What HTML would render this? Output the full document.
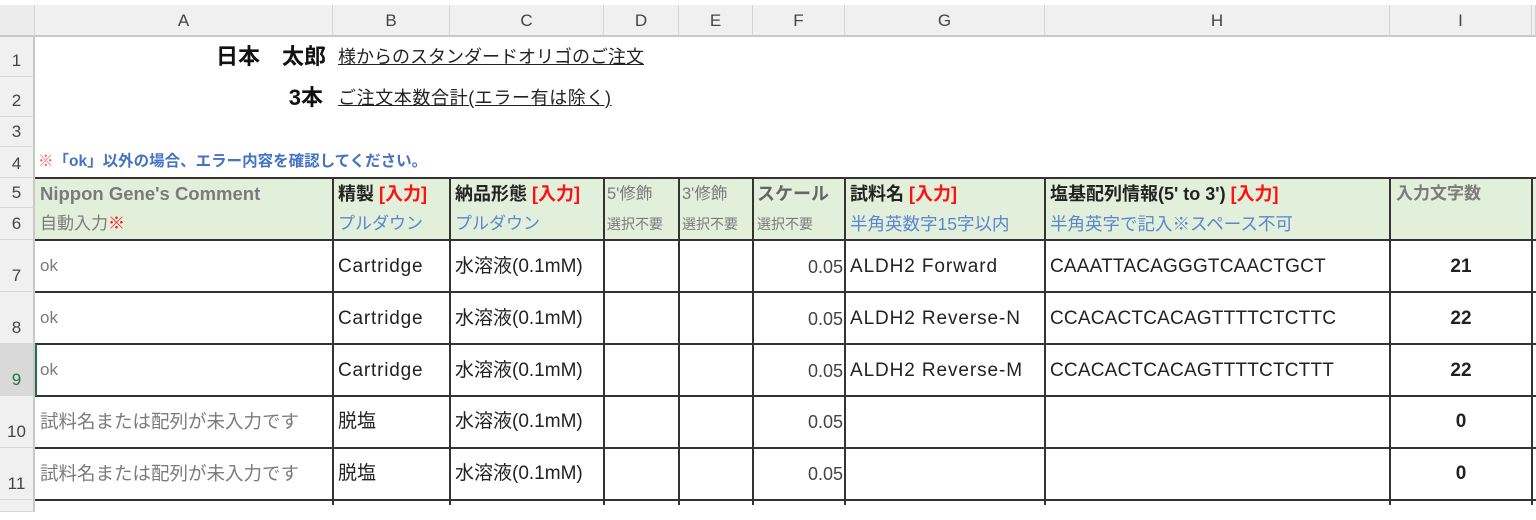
<!DOCTYPE html>
<html><head><meta charset="utf-8"><style>
*{margin:0;padding:0;box-sizing:border-box}
body{width:1536px;height:512px;background:#fff;position:relative;overflow:hidden;font-family:"Liberation Sans","Noto Sans CJK JP",sans-serif;color:#222}
.a{position:absolute;white-space:nowrap}
.ch{position:absolute;top:5px;height:32px;line-height:32px;text-align:center;font-size:17px;color:#444;background:#f0f0f0;border-right:1px solid #d4d4d4;border-bottom:2px solid #c8c8c8}
.rh{position:absolute;left:0;width:35px;background:#f0f0f0;border-bottom:1px solid #d8d8d8;border-right:2px solid #c8c8c8;font-size:17px;color:#444;text-align:center}
.vl{position:absolute;width:2px;background:#333}
.hl{position:absolute;height:2px;background:#333;left:35px;width:1501px}
.t{position:absolute;white-space:nowrap;font-size:18px;line-height:24px;height:24px;color:#222}
.t span{line-height:24px}
.d{font-size:19px}
.g{color:#7b7b7b}.b{color:#5b86d0}.r{color:#ff1010}
</style></head><body>
<div class="ch" style="left:0;width:35px;background:#ececec"></div>
<div class="ch" style="left:35px;width:298px">A</div>
<div class="ch" style="left:333px;width:117px">B</div>
<div class="ch" style="left:450px;width:154px">C</div>
<div class="ch" style="left:604px;width:75px">D</div>
<div class="ch" style="left:679px;width:74px">E</div>
<div class="ch" style="left:753px;width:92px">F</div>
<div class="ch" style="left:845px;width:200px">G</div>
<div class="ch" style="left:1045px;width:345px">H</div>
<div class="ch" style="left:1390px;width:142px">I</div>
<div class="ch" style="left:1532px;width:4px"></div>
<div class="rh" style="top:37px;height:40px;line-height:48px">1</div>
<div class="rh" style="top:77px;height:40px;line-height:48px">2</div>
<div class="rh" style="top:117px;height:30px;line-height:30px">3</div>
<div class="rh" style="top:147px;height:31px;line-height:34px">4</div>
<div class="rh" style="top:178px;height:30px;line-height:30px">5</div>
<div class="rh" style="top:208px;height:32px;line-height:32px">6</div>
<div class="rh" style="top:240px;height:52px;line-height:72px">7</div>
<div class="rh" style="top:292px;height:52px;line-height:72px">8</div>
<div class="rh" style="top:344px;height:52px;line-height:72px;background:#d9d9d9;color:#217346">9</div>
<div class="rh" style="top:396px;height:52px;line-height:72px">10</div>
<div class="rh" style="top:448px;height:52px;line-height:72px">11</div>
<div class="rh" style="top:500px;height:12px"></div>
<div class="a" style="left:35px;top:178px;width:1501px;height:62px;background:#e2efda"></div>
<div class="hl" style="top:177px"></div>
<div class="hl" style="top:239px"></div>
<div class="hl" style="top:291px"></div>
<div class="hl" style="top:343px"></div>
<div class="hl" style="top:395px"></div>
<div class="hl" style="top:447px"></div>
<div class="hl" style="top:499px"></div>
<div class="vl" style="left:332px;top:177px;height:328px"></div>
<div class="vl" style="left:449px;top:177px;height:328px"></div>
<div class="vl" style="left:603px;top:177px;height:328px"></div>
<div class="vl" style="left:678px;top:177px;height:328px"></div>
<div class="vl" style="left:752px;top:177px;height:328px"></div>
<div class="vl" style="left:844px;top:177px;height:328px"></div>
<div class="vl" style="left:1044px;top:177px;height:328px"></div>
<div class="vl" style="left:1389px;top:177px;height:328px"></div>
<div class="vl" style="left:1531px;top:177px;height:328px"></div>
<div class="a" style="left:35px;top:344px;width:2px;height:52px;background:#217346"></div>
<div class="t" style="right:1210px;top:43px;font-size:22px;line-height:28px;height:28px;font-weight:bold;color:#111">日本　太郎</div>
<div class="t" style="left:338px;top:45px;text-decoration:underline">様からのスタンダードオリゴのご注文</div>
<div class="t" style="right:1213px;top:84px;font-size:22px;line-height:28px;height:28px;font-weight:bold;color:#111">3本</div>
<div class="t" style="left:338px;top:86px;text-decoration:underline;letter-spacing:0.6px">ご注文本数合計(エラー有は除く)</div>
<div class="t" style="left:38px;top:150px;font-size:15.5px;font-weight:bold;color:#4472c4"><span style="color:#ff6060">※</span>「ok」以外の場合、エラー内容を確認してください。</div>
<div class="t g" style="left:40px;top:182px;font-weight:bold;font-size:18.5px">Nippon Gene's Comment</div>
<div class="t g" style="left:40px;top:212px;font-size:17px">自動入力<span class="r">※</span></div>
<div class="t" style="left:338px;top:182px;font-weight:bold">精製 <span class="r">[入力]</span></div>
<div class="t b" style="left:338px;top:212px;font-size:17px">プルダウン</div>
<div class="t" style="left:455px;top:182px;font-weight:bold">納品形態 <span class="r">[入力]</span></div>
<div class="t b" style="left:455px;top:212px;font-size:17px">プルダウン</div>
<div class="t g" style="left:607px;top:182px;font-size:16.5px">5'修飾</div>
<div class="t g" style="left:607px;top:212px;font-size:14px">選択不要</div>
<div class="t g" style="left:682px;top:182px;font-size:16.5px">3'修飾</div>
<div class="t g" style="left:682px;top:212px;font-size:14px">選択不要</div>
<div class="t" style="left:757px;top:182px;font-weight:bold;color:#666">スケール</div>
<div class="t g" style="left:757px;top:212px;font-size:14px">選択不要</div>
<div class="t" style="left:850px;top:182px;font-weight:bold">試料名 <span class="r">[入力]</span></div>
<div class="t b" style="left:850px;top:212px;font-size:17.5px">半角英数字15字以内</div>
<div class="t" style="left:1050px;top:182px;font-weight:bold">塩基配列情報(5' to 3') <span class="r">[入力]</span></div>
<div class="t b" style="left:1050px;top:212px;font-size:17.5px">半角英字で記入※スペース不可</div>
<div class="t g" style="left:1396px;top:182px;font-weight:bold;font-size:17px">入力文字数</div>
<div class="t g" style="left:40px;top:254px;font-size:17px">ok</div>
<div class="t g" style="left:40px;top:306px;font-size:17px">ok</div>
<div class="t g" style="left:40px;top:358px;font-size:17px">ok</div>
<div class="t g" style="left:40px;top:410px;font-size:18.5px">試料名または配列が未入力です</div>
<div class="t g" style="left:40px;top:462px;font-size:18.5px">試料名または配列が未入力です</div>
<div class="t d" style="left:338px;top:255px;letter-spacing:0.8px">Cartridge</div>
<div class="t d" style="left:338px;top:307px;letter-spacing:0.8px">Cartridge</div>
<div class="t d" style="left:338px;top:359px;letter-spacing:0.8px">Cartridge</div>
<div class="t d" style="left:338px;top:410px">脱塩</div>
<div class="t d" style="left:338px;top:462px">脱塩</div>
<div class="t d" style="left:455px;top:255px">水溶液(0.1mM)</div>
<div class="t d" style="left:455px;top:307px">水溶液(0.1mM)</div>
<div class="t d" style="left:455px;top:359px">水溶液(0.1mM)</div>
<div class="t d" style="left:455px;top:410px">水溶液(0.1mM)</div>
<div class="t d" style="left:455px;top:462px">水溶液(0.1mM)</div>
<div class="t" style="right:693px;top:255px;color:#444">0.05</div>
<div class="t" style="right:693px;top:307px;color:#444">0.05</div>
<div class="t" style="right:693px;top:359px;color:#444">0.05</div>
<div class="t" style="right:693px;top:410px;color:#444">0.05</div>
<div class="t" style="right:693px;top:462px;color:#444">0.05</div>
<div class="t d" style="left:850px;top:255px;letter-spacing:0.9px">ALDH2 Forward</div>
<div class="t d" style="left:850px;top:307px;letter-spacing:0.9px">ALDH2 Reverse-N</div>
<div class="t d" style="left:850px;top:359px;letter-spacing:0.9px">ALDH2 Reverse-M</div>
<div class="t d" style="left:1050px;top:255px;letter-spacing:0.2px">CAAATTACAGGGTCAACTGCT</div>
<div class="t d" style="left:1050px;top:307px;letter-spacing:0.2px">CCACACTCACAGTTTTCTCTTC</div>
<div class="t d" style="left:1050px;top:359px;letter-spacing:0.2px">CCACACTCACAGTTTTCTCTTT</div>
<div class="t d" style="left:1390px;width:142px;text-align:center;top:255px;font-weight:bold">21</div>
<div class="t d" style="left:1390px;width:142px;text-align:center;top:307px;font-weight:bold">22</div>
<div class="t d" style="left:1390px;width:142px;text-align:center;top:359px;font-weight:bold">22</div>
<div class="t d" style="left:1390px;width:142px;text-align:center;top:410px;font-weight:bold">0</div>
<div class="t d" style="left:1390px;width:142px;text-align:center;top:462px;font-weight:bold">0</div>
</body></html>
